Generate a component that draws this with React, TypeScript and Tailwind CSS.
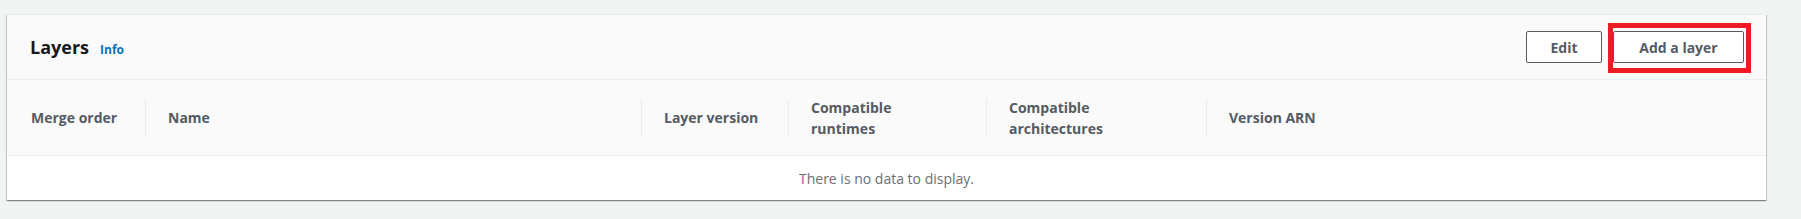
const columns = [
  { label: 'Merge order', width: 'w-[138px]', first: true },
  { label: 'Name', width: 'w-[496px]' },
  { label: 'Layer version', width: 'w-[147px]' },
  { label: 'Compatible runtimes', width: 'w-[198px]', wrap: true },
  { label: 'Compatible architectures', width: 'w-[220px]', wrap: true },
  { label: 'Version ARN', width: 'flex-1' },
]

function HeaderCell({ label, width, first, wrap }: { label: string; width: string; first?: boolean; wrap?: boolean }) {
  return (
    <div className={`${width} flex items-center`}>
      {!first && <span className="h-[38px] w-px shrink-0 bg-[#eaeded]" />}
      <span
        className={`${first ? 'ml-[24px]' : 'ml-[22px]'} ${wrap ? 'w-[110px]' : ''} text-[14px] font-bold leading-[21px] text-[#545b64]`}
      >
        {label}
      </span>
    </div>
  )
}

export default function App() {
  return (
    <div
      className="h-[219px] w-full bg-[#f2f3f3] pt-[14px] pl-[7px] pr-[35px]"
      style={{ fontFamily: '"Open Sans", "Noto Sans", Arial, sans-serif' }}
    >
      <div className="border-t border-[#eaeded] bg-white shadow-[0_1px_1px_0_rgba(0,28,36,0.3),1px_1px_1px_0_rgba(0,28,36,0.15),-1px_1px_1px_0_rgba(0,28,36,0.15)]">
        {/* card header */}
        <div className="flex h-[65px] items-center justify-between border-b border-[#eaeded] bg-[#fafafa] pl-[23px] pr-[22px]">
          <div className="flex items-baseline gap-[11px]">
            <h2 className="text-[18px] font-bold leading-[22px] text-[#16191f]">Layers</h2>
            <a className="text-[12px] font-bold text-[#0073bb]">Info</a>
          </div>
          <div className="flex items-center gap-[11px]">
            <button className="h-[32px] w-[76px] rounded-[2px] border border-[#545b64] bg-white text-[14px] font-bold text-[#545b64]">
              Edit
            </button>
            <span className="relative">
              <button className="h-[32px] w-[131px] rounded-[2px] border border-[#545b64] bg-white text-[14px] font-bold text-[#545b64]">
                Add a layer
              </button>
              <span className="pointer-events-none absolute -left-[5px] -top-[8px] h-[50px] w-[143px] border-[5px] border-[#ec1c24]" />
            </span>
          </div>
        </div>

        {/* table head */}
        <div className="flex h-[76px] border-b border-[#eaeded] bg-[#fafafa]">
          {columns.map((c) => (
            <HeaderCell key={c.label} {...c} />
          ))}
        </div>

        {/* empty body */}
        <div className="flex h-[44px] items-center justify-center text-[14px] text-[#687078]">
          There is no data to display.
        </div>
      </div>
    </div>
  )
}
